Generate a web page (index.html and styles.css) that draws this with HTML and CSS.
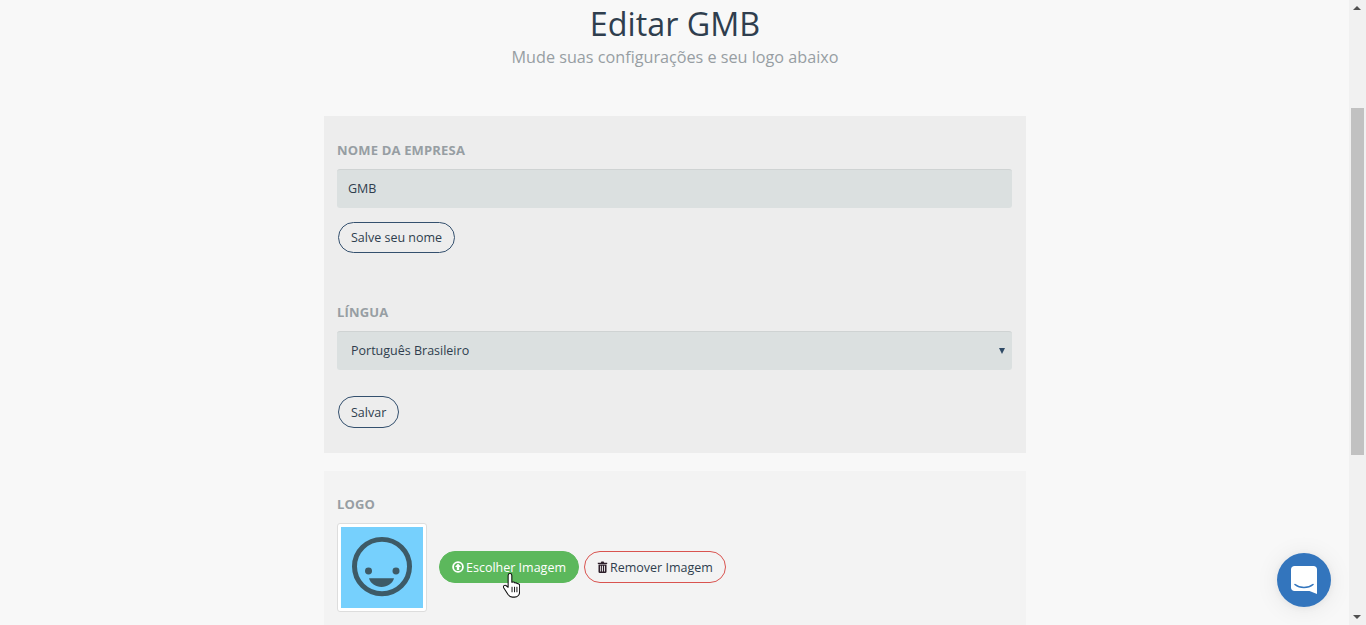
FILE: index.html
```html
<!doctype html>
<html lang="pt-BR">
<head>
  <meta charset="utf-8">
  <title>Editar GMB</title>
  <link rel="stylesheet" href="styles.css">
</head>
<body>
  <main class="page">
    <header class="page-head">
      <h1>Editar GMB</h1>
      <p>Mude suas configurações e seu logo abaixo</p>
    </header>

    <section class="card card-dark">
      <label class="field-label" for="companyName">Nome da empresa</label>
      <input id="companyName" class="field" type="text" value="GMB">
      <button class="btn btn-save btn-name" type="button">Salve seu nome</button>

      <label class="field-label label-lang" for="lang">Língua</label>
      <div class="select-box">
        <select id="lang" class="field field-select">
          <option>Português Brasileiro</option>
        </select>
        <span class="select-arrow"></span>
      </div>
      <button class="btn btn-save btn-lang" type="button">Salvar</button>
    </section>

    <section class="card card-light">
      <div class="field-label">Logo</div>
      <div class="logo-row">
        <div class="logo-thumb">
          <svg class="logo-face" viewBox="0 0 82 82" width="82" height="81" preserveAspectRatio="none">
            <rect width="82" height="82" fill="#76d0fd"/>
            <circle cx="41" cy="40" r="27.5" fill="none" stroke="#3d5a66" stroke-width="5"/>
            <circle cx="27.500" cy="44.500" r="3.500" fill="#3d5a66"/>
            <circle cx="55" cy="44.500" r="3.500" fill="#3d5a66"/>
            <path d="M28 52h25c-1.500 5.500-6.500 8.700-12.500 8.700S29.500 57.500 28 52z" fill="#3d5a66"/>
          </svg>
        </div>
        <button class="btn btn-choose" type="button">
          <svg class="btn-icon" viewBox="0 0 12 12" width="12" height="12">
            <circle cx="6" cy="6" r="5.800" fill="#fff"/>
            <circle cx="6" cy="6" r="4" fill="#5cb85c"/>
            <path d="M6 2.600 9 6H7.200v3H4.800V6H3z" fill="#fff"/>
          </svg>Escolher Imagem
        </button>
        <button class="btn btn-remove" type="button">
          <svg class="btn-icon" viewBox="0 0 11 12" width="11" height="12">
            <path d="M3.800 1.700 4.400.4h2.200l.6 1.300h3v1.200H.8V1.700zM1.500 3.500h8v7.300c0 .7-.4 1.200-1 1.200h-6c-.6 0-1-.5-1-1.200zm1.700 1.300v5.800h.9V4.800zm1.900 0v5.800h.9V4.800zm1.900 0v5.800h.9V4.800z" fill="#2d1f2a"/>
          </svg>Remover Imagem
        </button>
      </div>
    </section>
  </main>

  <div class="scrollbar">
    <span class="scroll-arrow arrow-up"></span>
    <span class="scroll-thumb"></span>
    <span class="scroll-arrow arrow-down"></span>
  </div>

  <button class="chat-bubble" type="button" aria-label="Chat">
    <svg viewBox="0 0 26 28" width="26" height="28">
      <path d="M3.500 0h19C24.500 0 26 1.500 26 3.500V28l-7.500-3h-15C1.500 25 0 23.500 0 21.500v-18C0 1.500 1.500 0 3.500 0z" fill="#fff"/>
      <path d="M4 18.500c2.500 2 5.500 3 9 3s6.500-1 9-3" fill="none" stroke="#3375bd" stroke-width="1.600" stroke-linecap="round"/>
    </svg>
  </button>

  <svg class="cursor" viewBox="0.400 0.300 15.600 23" width="17" height="25">
    <path d="M6.800.8c1 0 1.700.7 1.700 1.700v6.300l1.300-.2c.8-.1 1.300.2 1.600.8.800-.3 1.600 0 1.900.7 1.200-.3 2.400.4 2.400 1.800v5.300c0 2.800-1.800 5.300-4.700 5.300H9c-1.800 0-3-.9-4-2.400L1 13.800c-.8-1.500 1-2.900 2.400-1.800l1.700 1.400V2.500c0-1 .7-1.700 1.700-1.700z" fill="#fff" stroke="#111" stroke-width="1" stroke-linejoin="round"/>
    <path d="M8.700 13v5M11 13v5M13.200 13v5" stroke="#111" stroke-width="0.900" fill="none"/>
  </svg>
</body>
</html>
```

FILE: styles.css
```css
html, body {
    margin: 0;
    height: 625px;
    overflow: hidden;
}

body {
    background: #f8f8f8;
    color: #2c3e50;
    font: 12.5px/18px 'Open Sans', sans-serif;
}

.page {
    width: 702px;
    margin: 0 0 0 324px;
}

.page-head {
    text-align: center;
    height: 116px;
}

.page-head h1 {
    margin: 0;
    padding-top: 3px;
    font-size: 32.3px;
    line-height: 40px;
    font-weight: 400;
    color: #2f3e4e;
}

.page-head p {
    margin: 3px 0 0;
    font-size: 16.2px;
    line-height: 22px;
    color: #979ea3;
}

.card {
    box-sizing: border-box;
    padding: 25px 14px 0 13px;
}

.card-dark {
    background: #ededed;
    height: 337px;
    margin-bottom: 18px;
}

.card-light {
    background: #f3f3f3;
    height: 154px;
    padding-top: 24px;
}

.field-label {
    display: block;
    height: 18px;
    font-weight: 700;
    font-size: 13px;
    letter-spacing: 0.17px;
    line-height: 18px;
    color: #979ea3;
    text-transform: uppercase;
}

.label-lang {
    margin-top: 50px;
}

.field {
    display: block;
    box-sizing: border-box;
    width: 675px;
    height: 39px;
    margin-top: 10px;
    padding: 0 11px 2px;
    border: 0;
    border-top: 1px solid #cfd3d3;
    border-radius: 3px;
    background: #dbe0e0;
    color: #2f3e4e;
    font: 12.5px 'Open Sans', sans-serif;
}

.select-box {
    position: relative;
}

.field-select {
    padding-left: 14px;
    appearance: none;
    -webkit-appearance: none;
}

.select-arrow {
    position: absolute;
    right: 7px;
    top: 17px;
    border-left: 3px solid transparent;
    border-right: 3px solid transparent;
    border-top: 6px solid #2f4a66;
}

.btn {
    display: inline-flex;
    align-items: center;
    justify-content: center;
    box-sizing: border-box;
    height: 32px;
    padding: 0 12px;
    border: 1px solid #34506e;
    border-radius: 16px;
    background: transparent;
    color: #2f3e4e;
    font: 12.5px 'Open Sans', sans-serif;
}

.btn-save {
    display: flex;
    margin-left: 1px;
}

.btn-name {
    height: 31px;
    margin-top: 14px;
    padding-bottom: 1px;
}

.btn-lang {
    margin-top: 26px;
}

.logo-row {
    display: flex;
    align-items: center;
    margin-top: 10px;
}

.logo-thumb {
    box-sizing: border-box;
    width: 90px;
    height: 89px;
    padding: 3px;
    background: #fff;
    border: 1px solid #ddd;
    border-radius: 3px;
}

.logo-face {
    display: block;
}

.btn-icon {
    margin-right: 2px;
}

.btn-choose {
    margin-left: 12px;
    margin-bottom: 1px;
    background: #5cb85c;
    border-color: #5cb85c;
    color: #fff;
}

.btn-remove {
    margin-left: 5px;
    margin-bottom: 1px;
    border-color: #d9534f;
}

.scrollbar {
    position: fixed;
    top: 0;
    right: 0;
    width: 17px;
    height: 625px;
    background: #f1f1f1;
}

.scroll-thumb {
    position: absolute;
    left: 2px;
    top: 108px;
    width: 13px;
    height: 347px;
    background: #c1c1c1;
}

.scroll-arrow {
    position: absolute;
    left: 4px;
    border-left: 4px solid transparent;
    border-right: 4px solid transparent;
}

.arrow-up {
    top: 6px;
    border-bottom: 4px solid #505050;
}

.arrow-down {
    bottom: 6px;
    border-top: 4px solid #505050;
}

.chat-bubble {
    position: fixed;
    left: 1277px;
    top: 553px;
    width: 54px;
    height: 54px;
    padding: 0;
    border: 0;
    border-radius: 50%;
    background: #3375bd;
    box-shadow: 0 1px 10px rgba(0, 0, 0, 0.06), 0 2px 24px rgba(0, 0, 0, 0.08);
    display: flex;
    align-items: center;
    justify-content: center;
}

.cursor {
    position: fixed;
    left: 503px;
    top: 573px;
}
```
